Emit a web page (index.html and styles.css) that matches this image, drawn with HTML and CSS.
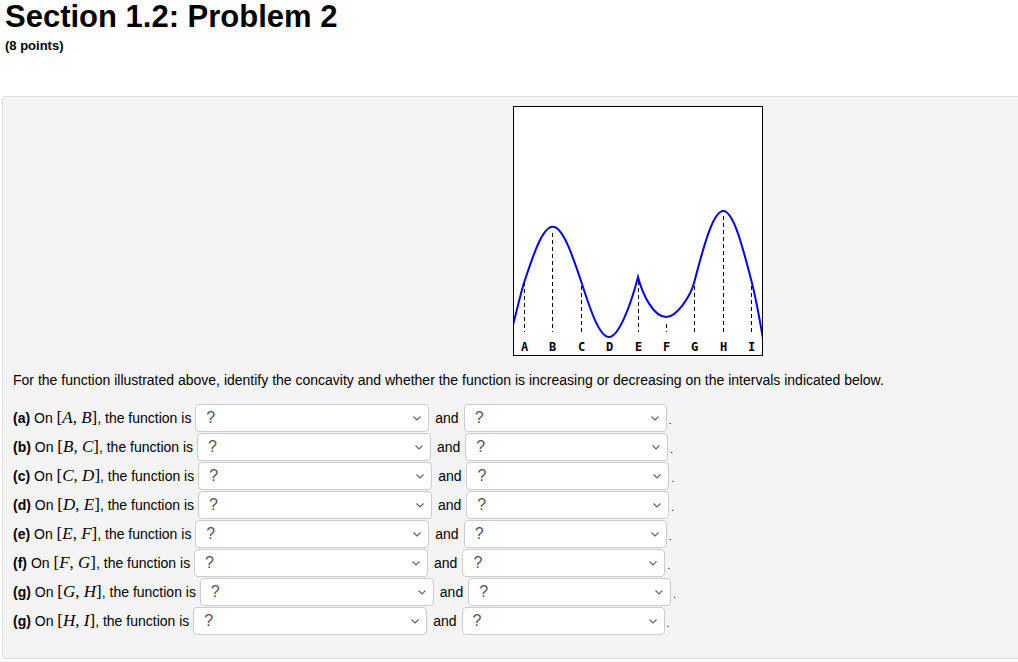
FILE: index.html
```html
<!DOCTYPE html>
<html>
<head>
<meta charset="utf-8">
<link rel="stylesheet" href="styles.css">
</head>
<body>
<div class="page">
  <h1 class="title">Section 1.2: Problem 2</h1>
  <div class="points">(8 points)</div>
  <div class="panel">
    <div class="figure">
      <svg width="250" height="250" viewBox="0 0 250 250">
        <defs><clipPath id="clip"><rect x="1" y="1" width="248" height="248"/></clipPath></defs>
        <rect x="0.5" y="0.5" width="249" height="249" fill="#fff" stroke="#000" stroke-width="1"/>
        <g stroke="#000" stroke-width="1" stroke-dasharray="4,3" fill="none">
          <line x1="11.5" y1="176" x2="11.5" y2="226"/>
          <line x1="39.5" y1="127" x2="39.5" y2="226"/>
          <line x1="68.5" y1="180" x2="68.5" y2="226"/>
          <line x1="125.5" y1="175" x2="125.5" y2="226"/>
          <line x1="153.5" y1="218" x2="153.5" y2="226"/>
          <line x1="181.5" y1="180" x2="181.5" y2="226"/>
          <line x1="210.5" y1="110" x2="210.5" y2="226"/>
          <line x1="238.5" y1="180" x2="238.5" y2="226"/>
        </g>
        <path clip-path="url(#clip)" fill="none" stroke="#0000ff" stroke-width="2" d="M0,219 C3,208 7.5,187.5 11.3,176 C20.56,147.75 29.72,120.7 39.7,120.7 C49.9,120.7 59.24,148.75 68.7,177 C77.6,204.7 86.4,231 96,231 C106,231 118,198 125,171 C130,190 141,211 153.3,211 C163,211 177.3,191.4 181.3,176 C190.8,139.6 200.1,105 210.3,105 C220.3,105 229.4,139.6 238.7,176 C242.2,189.8 247,215 250,233"/>
        <g class="axis" text-anchor="middle">
          <text x="11.5" y="244.5">A</text>
          <text x="39.5" y="244.5">B</text>
          <text x="68.5" y="244.5">C</text>
          <text x="96.5" y="244.5">D</text>
          <text x="125.5" y="244.5">E</text>
          <text x="153.5" y="244.5">F</text>
          <text x="181.5" y="244.5">G</text>
          <text x="210.5" y="244.5">H</text>
          <text x="238.5" y="244.5">I</text>
        </g>
      </svg>
    </div>
    <p class="prompt">For the function illustrated above, identify the concavity and whether the function is increasing or decreasing on the intervals indicated below.</p>
    <div class="rows">
      <div class="row"><b>(a)</b>&nbsp;On&nbsp;<span class="math">[<i>A</i>, <i>B</i>]</span>, the function is&nbsp;<span class="sel sel1"><span class="q">?</span><svg class="chev" width="8" height="5" viewBox="0 0 8 5"><path d="M0.5 0.5 L4 4 L7.5 0.5" fill="none" stroke="#666" stroke-width="1.2"/></svg></span><span class="and">and</span><span class="sel sel2"><span class="q">?</span><svg class="chev" width="8" height="5" viewBox="0 0 8 5"><path d="M0.5 0.5 L4 4 L7.5 0.5" fill="none" stroke="#666" stroke-width="1.2"/></svg></span><span class="dot">.</span></div>
      <div class="row"><b>(b)</b>&nbsp;On&nbsp;<span class="math">[<i>B</i>, <i>C</i>]</span>, the function is&nbsp;<span class="sel sel1"><span class="q">?</span><svg class="chev" width="8" height="5" viewBox="0 0 8 5"><path d="M0.5 0.5 L4 4 L7.5 0.5" fill="none" stroke="#666" stroke-width="1.2"/></svg></span><span class="and">and</span><span class="sel sel2"><span class="q">?</span><svg class="chev" width="8" height="5" viewBox="0 0 8 5"><path d="M0.5 0.5 L4 4 L7.5 0.5" fill="none" stroke="#666" stroke-width="1.2"/></svg></span><span class="dot">.</span></div>
      <div class="row"><b>(c)</b>&nbsp;On&nbsp;<span class="math">[<i>C</i>, <i>D</i>]</span>, the function is&nbsp;<span class="sel sel1"><span class="q">?</span><svg class="chev" width="8" height="5" viewBox="0 0 8 5"><path d="M0.5 0.5 L4 4 L7.5 0.5" fill="none" stroke="#666" stroke-width="1.2"/></svg></span><span class="and">and</span><span class="sel sel2"><span class="q">?</span><svg class="chev" width="8" height="5" viewBox="0 0 8 5"><path d="M0.5 0.5 L4 4 L7.5 0.5" fill="none" stroke="#666" stroke-width="1.2"/></svg></span><span class="dot">.</span></div>
      <div class="row"><b>(d)</b>&nbsp;On&nbsp;<span class="math">[<i>D</i>, <i>E</i>]</span>, the function is&nbsp;<span class="sel sel1"><span class="q">?</span><svg class="chev" width="8" height="5" viewBox="0 0 8 5"><path d="M0.5 0.5 L4 4 L7.5 0.5" fill="none" stroke="#666" stroke-width="1.2"/></svg></span><span class="and">and</span><span class="sel sel2"><span class="q">?</span><svg class="chev" width="8" height="5" viewBox="0 0 8 5"><path d="M0.5 0.5 L4 4 L7.5 0.5" fill="none" stroke="#666" stroke-width="1.2"/></svg></span><span class="dot">.</span></div>
      <div class="row"><b>(e)</b>&nbsp;On&nbsp;<span class="math">[<i>E</i>, <i>F</i>]</span>, the function is&nbsp;<span class="sel sel1"><span class="q">?</span><svg class="chev" width="8" height="5" viewBox="0 0 8 5"><path d="M0.5 0.5 L4 4 L7.5 0.5" fill="none" stroke="#666" stroke-width="1.2"/></svg></span><span class="and">and</span><span class="sel sel2"><span class="q">?</span><svg class="chev" width="8" height="5" viewBox="0 0 8 5"><path d="M0.5 0.5 L4 4 L7.5 0.5" fill="none" stroke="#666" stroke-width="1.2"/></svg></span><span class="dot">.</span></div>
      <div class="row"><b>(f)</b>&nbsp;On&nbsp;<span class="math">[<i>F</i>, <i>G</i>]</span>, the function is&nbsp;<span class="sel sel1"><span class="q">?</span><svg class="chev" width="8" height="5" viewBox="0 0 8 5"><path d="M0.5 0.5 L4 4 L7.5 0.5" fill="none" stroke="#666" stroke-width="1.2"/></svg></span><span class="and">and</span><span class="sel sel2"><span class="q">?</span><svg class="chev" width="8" height="5" viewBox="0 0 8 5"><path d="M0.5 0.5 L4 4 L7.5 0.5" fill="none" stroke="#666" stroke-width="1.2"/></svg></span><span class="dot">.</span></div>
      <div class="row"><b>(g)</b>&nbsp;On&nbsp;<span class="math">[<i>G</i>, <i>H</i>]</span>, the function is&nbsp;<span class="sel sel1"><span class="q">?</span><svg class="chev" width="8" height="5" viewBox="0 0 8 5"><path d="M0.5 0.5 L4 4 L7.5 0.5" fill="none" stroke="#666" stroke-width="1.2"/></svg></span><span class="and">and</span><span class="sel sel2"><span class="q">?</span><svg class="chev" width="8" height="5" viewBox="0 0 8 5"><path d="M0.5 0.5 L4 4 L7.5 0.5" fill="none" stroke="#666" stroke-width="1.2"/></svg></span><span class="dot">.</span></div>
      <div class="row"><b>(g)</b>&nbsp;On&nbsp;<span class="math">[<i>H</i>, <i>I</i>]</span>, the function is&nbsp;<span class="sel sel1"><span class="q">?</span><svg class="chev" width="8" height="5" viewBox="0 0 8 5"><path d="M0.5 0.5 L4 4 L7.5 0.5" fill="none" stroke="#666" stroke-width="1.2"/></svg></span><span class="and">and</span><span class="sel sel2"><span class="q">?</span><svg class="chev" width="8" height="5" viewBox="0 0 8 5"><path d="M0.5 0.5 L4 4 L7.5 0.5" fill="none" stroke="#666" stroke-width="1.2"/></svg></span><span class="dot">.</span></div>
    </div>
  </div>
</div>
</body>
</html>
```

FILE: styles.css
```css
html, body {
  margin: 0;
  padding: 0;
  overflow: hidden;
  background: #fff;
  color: #000;
  font-family: "Liberation Sans", Arial, sans-serif;
}

.page {
  padding-left: 2px;
}

.title {
  margin: 0;
  padding-left: 3px;
  font-size: 31px;
  line-height: 34px;
  font-weight: bold;
}

.points {
  margin: 4px 0 0 3px;
  font-size: 13px;
  line-height: 15px;
  font-weight: bold;
}

.panel {
  margin-top: 43px;
  width: 1270px;
  background: #f4f4f4;
  border: 1px solid #dedede;
  border-radius: 3px 0 0 3px;
  padding: 9px 0 23px 0;
}

.figure {
  display: flex;
  justify-content: center;
}

.figure svg {
  display: block;
}

.axis text {
  font-family: "DejaVu Sans Mono", "Liberation Mono", monospace;
  font-weight: bold;
  font-size: 12px;
  fill: #000;
}

.prompt {
  margin: 16px 0 0 0;
  padding-left: 10px;
  font-size: 14px;
  line-height: 16px;
}

.rows {
  margin-top: 16px;
  padding-left: 10px;
  display: flex;
  flex-direction: column;
  gap: 1px;
}

.row {
  display: flex;
  align-items: center;
  height: 28px;
  font-size: 14px;
  white-space: nowrap;
}

.math {
  font-family: "Liberation Serif", "Times New Roman", serif;
  font-size: 17px;
}

.math i {
  font-style: italic;
}

.sel {
  box-sizing: border-box;
  height: 28px;
  display: flex;
  align-items: center;
  justify-content: space-between;
  padding: 0 7px 0 10px;
  background: #fff;
  border: 1px solid #cccccc;
  border-radius: 4px;
}

.sel1 {
  width: 234px;
}

.sel2 {
  width: 203px;
}

.q {
  color: #555;
  font-size: 16px;
}

.chev {
  display: block;
}

.and {
  margin: 0 5px 0 6px;
}

.dot {
  margin-left: 2px;
  font-size: 10px;
  align-self: flex-end;
  margin-bottom: 6px;
}
```
